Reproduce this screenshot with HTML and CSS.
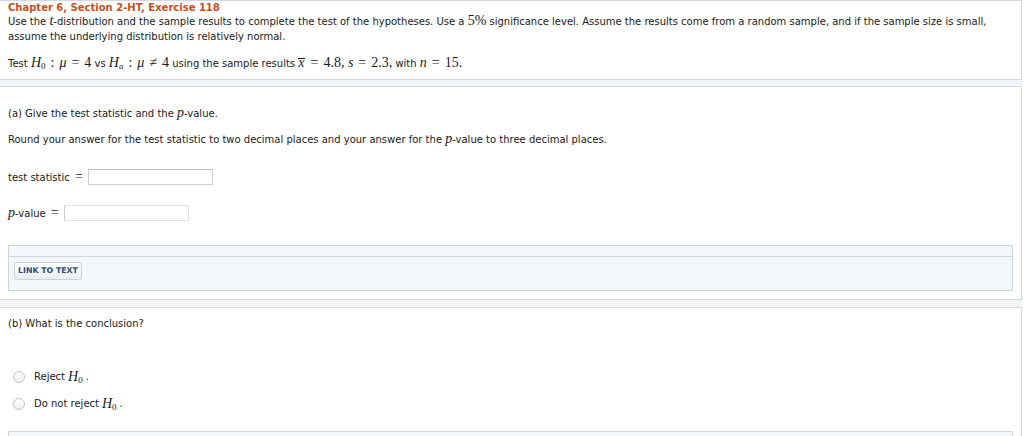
FILE: index.html
```html
<!DOCTYPE html>
<html>
<head>
<meta charset="utf-8">
<link rel="stylesheet" href="styles.css">
</head>
<body>
<div class="page">
  <section class="panel panel-intro">
    <h1 class="title">Chapter 6, Section 2-HT, Exercise 118</h1>
    <p class="para first">Use the <span class="m mi">t</span>-distribution and the sample results to complete the test of the hypotheses. Use a <span class="m">5%</span> significance level. Assume the results come from a random sample, and if the sample size is small, assume the underlying distribution is relatively normal.</p>
    <p class="para test">Test <span class="m"><i>H</i><sub>0</sub><span class="rel">:</span><i>μ</i><span class="rel">=</span>4</span> vs <span class="m"><i>H</i><sub><i>a</i></sub><span class="rel">:</span><i>μ</i><span class="rel">≠</span>4</span> using the sample results <span class="m"><i class="xbar">x</i><span class="rel">=</span>4.8, <i>s</i><span class="rel">=</span>2.3,</span> with <span class="m"><i>n</i><span class="rel">=</span>15.</span></p>
  </section>

  <section class="panel panel-a">
    <p class="para q">(a) Give the test statistic and the <span class="m mi">p</span>-value.</p>
    <p class="para round">Round your answer for the test statistic to two decimal places and your answer for the <span class="m mi">p</span>-value to three decimal places.</p>
    <div class="field field-ts">
      <span class="label">test statistic <span class="m eq">=</span></span>
      <span class="input"></span>
    </div>
    <div class="field field-p">
      <span class="label"><span class="m mi">p</span>-value <span class="m eq">=</span></span>
      <span class="input"></span>
    </div>
    <div class="toolbox">
      <div class="toolbox-head"></div>
      <div class="toolbox-body">
        <span class="btn">LINK TO TEXT</span>
      </div>
    </div>
  </section>

  <section class="panel panel-b">
    <p class="para q">(b) What is the conclusion?</p>
    <div class="options">
      <label class="option"><span class="radio"></span>Reject <span class="m"><i>H</i><sub>0</sub></span> .</label>
      <label class="option"><span class="radio"></span>Do not reject <span class="m"><i>H</i><sub>0</sub></span> .</label>
    </div>
    <div class="toolbox toolbox-b"></div>
  </section>
</div>
</body>
</html>
```

FILE: styles.css
```css
html, body {
  margin: 0;
  padding: 0;
  background: #ffffff;
}
body {
  font-family: "DejaVu Sans", Verdana, sans-serif;
  font-size: 10px;
  color: #1a1a1a;
  height: 436px;
  overflow: hidden;
}
.page {
  width: 1022px;
  background: #f2f5f8;
}
.panel {
  background: #ffffff;
  border: 1px solid #d2d9e2;
  border-left: none;
  box-sizing: border-box;
  padding: 0 8px;
}
.panel-intro {
  height: 80px;
  padding-top: 1px;
}
.panel-a {
  margin-top: 6px;
  height: 214px;
  padding-top: 19px;
}
.panel-b {
  margin-top: 7px;
  height: 200px;
  padding-top: 8px;
}
.title {
  margin: 0;
  font-size: 10px;
  font-weight: bold;
  color: #c8501e;
  line-height: 12px;
}
.para {
  margin: 0;
  line-height: 15px;
}
.para.first {
  margin-top: 0;
}
.test {
  margin-top: 12px;
}
.m {
  font-family: "Liberation Serif", "Times New Roman", serif;
  font-size: 14px;
  line-height: 10px;
}
.mi, .m i {
  font-style: italic;
}
.m sub {
  font-size: 9px;
  vertical-align: -2px;
  line-height: 0;
}
.rel {
  margin: 0 5px;
}
.xbar {
  display: inline-block;
  border-top: 1px solid #1a1a1a;
  line-height: 8px;
  padding-right: 1px;
}
.q {
  margin-top: 0;
}
.round {
  margin-top: 11px;
}
.field {
  display: flex;
  align-items: center;
  gap: 3px;
}
.eq {
  margin-left: 2px;
  margin-right: 2px;
}
.field-ts {
  margin-top: 22px;
}
.field-p {
  margin-top: 20px;
}
.input {
  display: block;
  height: 14px;
  border: 1px solid #cfcfcf;
  border-top-color: #bdbdbd;
  background: #fff;
}
.field-ts .input { width: 123px; }
.field-p .input { width: 123px; border-color: #e2e2e2; border-left-color: #cfcfcf; }
.toolbox {
  margin-top: 24px;
  border: 1px solid #cdd5df;
  background: #f4f7fa;
}
.toolbox-head {
  height: 10px;
  border-bottom: 1px solid #cdd5df;
}
.toolbox-body {
  height: 33px;
  padding: 5px 5px 0;
  box-sizing: border-box;
}
.btn {
  display: inline-block;
  box-sizing: border-box;
  height: 18px;
  width: 68px;
  line-height: 16px;
  text-align: center;
  font-size: 7.8px;
  font-weight: bold;
  color: #2c4a7c;
  border: 1px solid #cad1da;
  border-radius: 3px;
  background: linear-gradient(#ffffff, #eaedf1);
}
.options {
  margin-top: 36px;
  display: flex;
  flex-direction: column;
  gap: 8px;
}
.option {
  display: flex;
  align-items: center;
  height: 19px;
}
.radio {
  width: 12px;
  height: 12px;
  border: 1px solid #bfc4c9;
  border-radius: 50%;
  background: linear-gradient(#ffffff, #eeeeee);
  margin-left: 5px;
  margin-right: 9px;
  box-sizing: border-box;
}
.option .m {
  margin-left: 3px;
  margin-right: 3px;
}
.toolbox-b {
  margin-top: 18px;
  height: 20px;
}
```
